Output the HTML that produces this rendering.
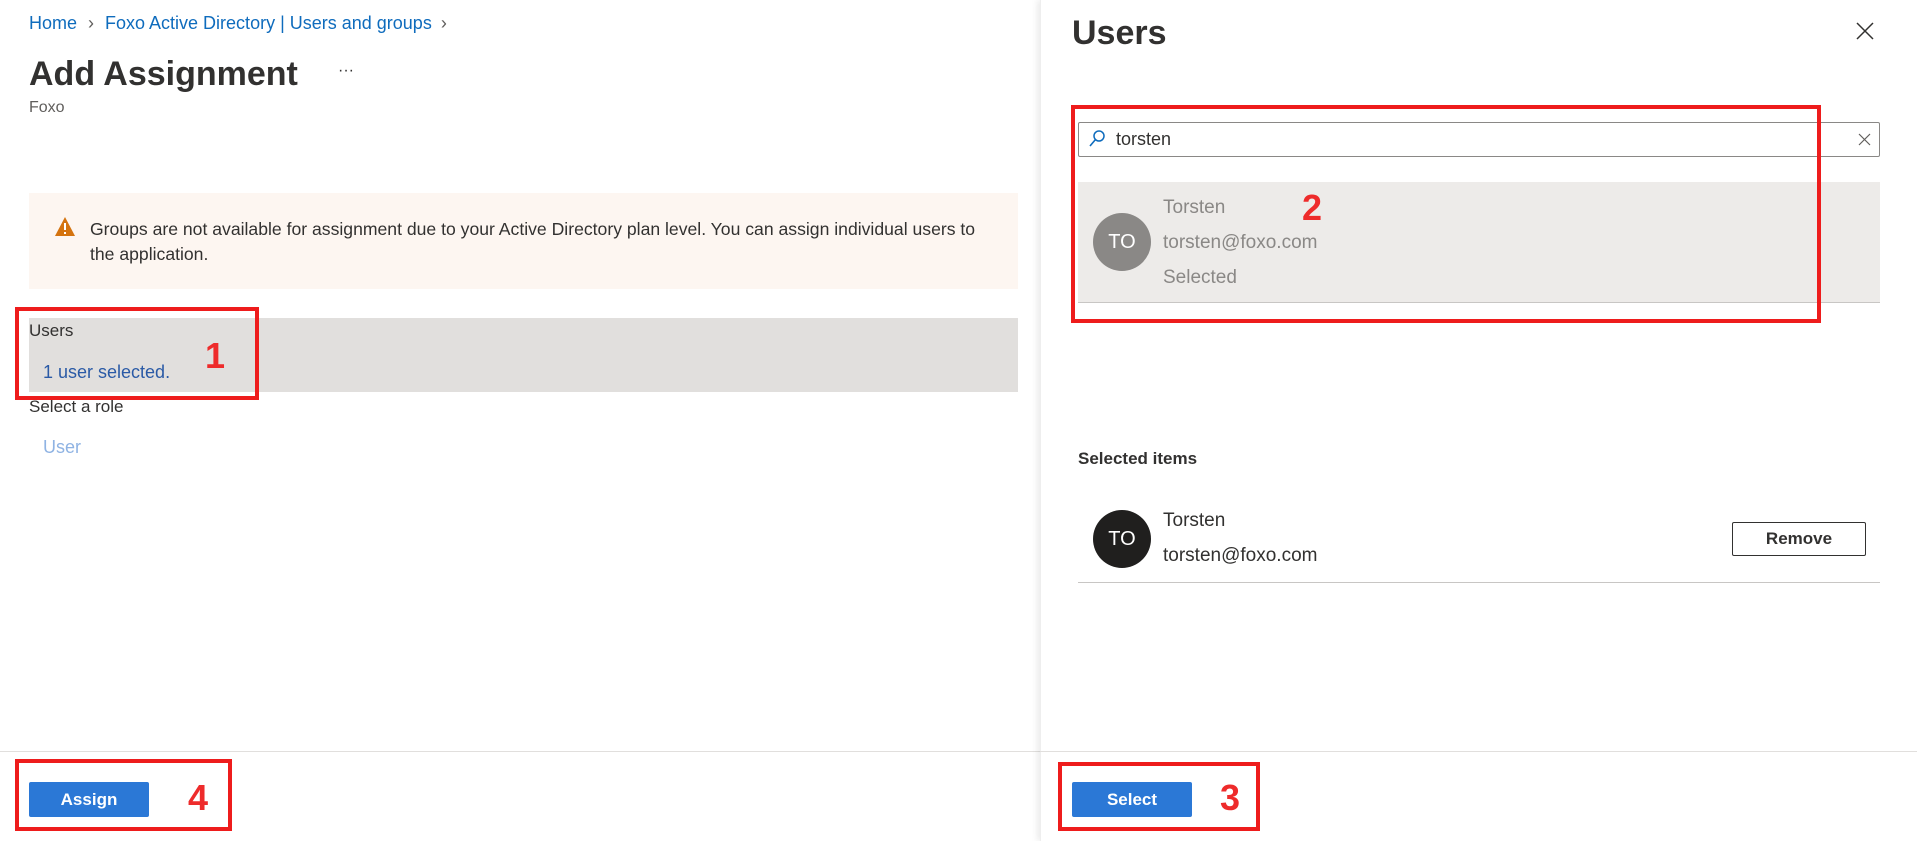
<!DOCTYPE html>
<html><head><meta charset="utf-8"><style>
*{margin:0;padding:0;box-sizing:border-box}
body{width:1917px;height:841px;position:relative;overflow:hidden;background:#fff;font-family:"Liberation Sans",sans-serif;color:#323130}
.a{position:absolute;white-space:nowrap}
.red{position:absolute;border:4px solid #ee1c1c}
.num{position:absolute;color:#ee2b2b;font-weight:bold;font-size:36px;line-height:1}
.btn{position:absolute;background:#2b78d6;color:#fff;font-weight:bold;font-size:17px;display:flex;align-items:center;justify-content:center;border-radius:2px}
</style></head><body>
<div class="a" style="left:29px;top:13px;font-size:18px;color:#0f6cbd">Home <span style="color:#605e5c;margin:0 6px">&#8250;</span> Foxo Active Directory | Users and groups <span style="color:#605e5c;margin-left:4px">&#8250;</span></div>
<div class="a" style="left:29px;top:55px;font-size:34px;font-weight:bold;color:#323130">Add Assignment</div>
<div class="a" style="left:338px;top:62px;font-size:16px;color:#323130">···</div>
<div class="a" style="left:29px;top:99px;font-size:16px;color:#605e5c">Foxo</div>
<div class="a" style="left:29px;top:193px;width:989px;height:96px;background:#fdf6f1"></div>
<svg class="a" style="left:54px;top:216px" width="22" height="22" viewBox="0 0 22 22"><path d="M11 1 L21 20 H1 Z" fill="#d4730f"/><rect x="10" y="7" width="2" height="7" fill="#fff"/><rect x="10" y="16" width="2" height="2" fill="#fff"/></svg>
<div class="a" style="left:90px;top:217px;font-size:17.6px;line-height:25px;color:#323130">Groups are not available for assignment due to your Active Directory plan level. You can assign individual users to<br>the application.</div>
<div class="a" style="left:29px;top:318px;width:989px;height:74px;background:#e1dfdd"></div>
<div class="a" style="left:29px;top:321px;font-size:17px">Users</div>
<div class="a" style="left:43px;top:362px;font-size:18px;color:#2a5aa6">1 user selected.</div>
<div class="red" style="left:15px;top:307px;width:244px;height:93px"></div>
<div class="num" style="left:205px;top:338px">1</div>
<div class="a" style="left:29px;top:397px;font-size:17px">Select a role</div>
<div class="a" style="left:43px;top:437px;font-size:18px;color:#8fb3e3">User</div>
<div class="a" style="left:0;top:751px;width:1040px;height:1px;background:#e1dfdd"></div>
<div class="btn" style="left:29px;top:782px;width:120px;height:35px">Assign</div>
<div class="red" style="left:15px;top:759px;width:217px;height:72px"></div>
<div class="num" style="left:188px;top:780px">4</div>
<div class="a" style="left:1040px;top:0;width:877px;height:841px;background:#fff;box-shadow:-3px 0 6px rgba(0,0,0,.08);border-left:1px solid #eee"></div>
<div class="a" style="left:1072px;top:14px;font-size:34px;font-weight:bold">Users</div>
<svg class="a" style="left:1856px;top:22px" width="18" height="18"><path d="M1 1L17 17M17 1L1 17" stroke="#323130" stroke-width="1.5"/></svg>
<div class="a" style="left:1078px;top:122px;width:802px;height:35px;border:1px solid #8a8886;border-radius:2px"></div>
<svg class="a" style="left:1088px;top:129px" width="18" height="20" viewBox="0 0 18 20"><circle cx="11" cy="7" r="5" fill="none" stroke="#0f6cbd" stroke-width="1.5"/><path d="M7.5 10.5L2 17" stroke="#0f6cbd" stroke-width="1.6"/></svg>
<div class="a" style="left:1116px;top:129px;font-size:18px;color:#323130">torsten</div>
<svg class="a" style="left:1858px;top:133px" width="13" height="13"><path d="M1 1L12 12M12 1L1 12" stroke="#605e5c" stroke-width="1.2"/></svg>
<div class="a" style="left:1078px;top:182px;width:802px;height:121px;background:#edebe9;border-bottom:1px solid #c8c6c4"></div>
<div class="a" style="left:1093px;top:213px;width:58px;height:58px;border-radius:50%;background:#8a8886;color:#fff;font-size:20px;display:flex;align-items:center;justify-content:center">TO</div>
<div class="a" style="left:1163px;top:190px;font-size:19px;color:#8a8886;line-height:35px">Torsten<br>torsten@foxo.com<br>Selected</div>
<div class="red" style="left:1071px;top:105px;width:750px;height:218px"></div>
<div class="num" style="left:1302px;top:190px">2</div>
<div class="a" style="left:1078px;top:449px;font-size:17px;font-weight:bold">Selected items</div>
<div class="a" style="left:1093px;top:510px;width:58px;height:58px;border-radius:50%;background:#201f1e;color:#fff;font-size:20px;display:flex;align-items:center;justify-content:center">TO</div>
<div class="a" style="left:1163px;top:503px;font-size:19px;line-height:35px;color:#323130">Torsten<br>torsten@foxo.com</div>
<div class="a" style="left:1732px;top:522px;width:134px;height:34px;border:1px solid #323130;border-radius:2px;font-size:17px;font-weight:bold;display:flex;align-items:center;justify-content:center">Remove</div>
<div class="a" style="left:1078px;top:582px;width:802px;height:1px;background:#c8c6c4"></div>
<div class="a" style="left:1040px;top:751px;width:877px;height:1px;background:#e1dfdd"></div>
<div class="btn" style="left:1072px;top:782px;width:120px;height:35px">Select</div>
<div class="red" style="left:1058px;top:762px;width:202px;height:69px"></div>
<div class="num" style="left:1220px;top:780px">3</div>
</body></html>
